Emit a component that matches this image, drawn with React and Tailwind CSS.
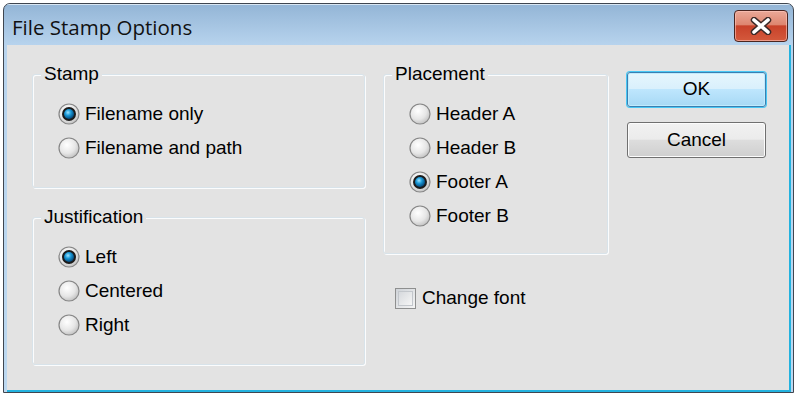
import React from 'react';

const font = { fontFamily: '"Liberation Sans", Arial, sans-serif' };

const Radio = ({ checked, id }) => (
    <svg width="22" height="22" viewBox="0 0 22 22" className="shrink-0">
        <defs>
            <radialGradient id={`rf${id}`} cx="40%" cy="35%" r="70%">
                <stop offset="0%" stopColor="#ffffff" />
                <stop offset="60%" stopColor="#e6e6e6" />
                <stop offset="100%" stopColor="#bdbdbd" />
            </radialGradient>
            <radialGradient id={`rb${id}`} cx="40%" cy="35%" r="65%">
                <stop offset="0%" stopColor="#9fe3ff" />
                <stop offset="45%" stopColor="#1a9ad8" />
                <stop offset="100%" stopColor="#05487a" />
            </radialGradient>
        </defs>
        <circle cx="11" cy="11" r="10" fill={`url(#rf${id})`} stroke="#878787" strokeWidth="1.2" />
        {checked && (
            <>
                <circle cx="11" cy="11" r="7" fill="#1b1b1b" />
                <circle cx="11" cy="11" r="5" fill={`url(#rb${id})`} />
            </>
        )}
    </svg>
);

const GroupBox = ({ label, height, children }) => (
    <div className={`relative border border-[#d8e3ea] rounded-[3px] shadow-[inset_1px_1px_0_#fbfcfd,1px_1px_0_#fbfcfd] pt-[22px] pl-[25px]`} style={{ height }}>
        <span className="absolute -top-[12px] left-[8px] px-[3px] bg-[#e3e3e3] text-[19px] leading-[22px] text-black">{label}</span>
        {children}
    </div>
);

const RadioRow = ({ label, checked, id }) => (
    <div className="flex items-center h-[34px] gap-[5px] text-[19px] text-black">
        <Radio checked={checked} id={id} />
        <span>{label}</span>
    </div>
);

const CloseButton = () => (
    <div className="w-[54px] h-[32px] rounded-[4px] border border-[#4a2520] overflow-hidden relative bg-[linear-gradient(#eaa898_0%,#de8670_45%,#c8422a_50%,#d4593c_100%)] flex items-center justify-center shadow-[inset_0_0_0_1px_rgba(255,200,190,0.6)]">
        <svg width="22" height="18" viewBox="0 0 22 18">
            <path d="M4 3 L18 15 M18 3 L4 15" stroke="#3c2a28" strokeWidth="6.5" strokeLinecap="round" />
            <path d="M4 3 L18 15 M18 3 L4 15" stroke="#ffffff" strokeWidth="3.6" strokeLinecap="round" />
        </svg>
    </div>
);

const App = () => {
    return (
        <div className="w-[800px] h-[398px] bg-white pt-[3px] pl-[3px]" style={font}>
            <div className="w-[791px] h-[390px] border border-[#3f4650] rounded-t-[7px] bg-[linear-gradient(#93b5d6_0px,#b8d4ee_42px,#bcd8f0_100%)] flex flex-col overflow-hidden">
                <div className="h-[41px] shrink-0 flex items-start justify-between pl-[8px] pr-[5px] shadow-[inset_0_1px_0_#d9e7f4]">
                    <span className="mt-[9px] text-[20.5px] leading-[28px] text-[#111]" style={{ fontFamily: '"Open Sans", "Noto Sans", sans-serif' }}>File Stamp Options</span>
                    <div className="mt-[6px]"><CloseButton /></div>
                </div>
                <div className="flex-1 ml-[3px] mr-[2px] border-r-2 border-b-2 border-[#23b2df] bg-[#e3e3e3] flex pl-[25px] pt-[27px]">
                    <div className="w-[333px] mt-[2px] flex flex-col gap-[29px]">
                        <GroupBox label="Stamp" height={114}>
                            <RadioRow id="s1" label="Filename only" checked />
                            <RadioRow id="s2" label="Filename and path" />
                        </GroupBox>
                        <GroupBox label="Justification" height={148}>
                            <RadioRow id="j1" label="Left" checked />
                            <RadioRow id="j2" label="Centered" />
                            <RadioRow id="j3" label="Right" />
                        </GroupBox>
                    </div>
                    <div className="w-[225px] ml-[18px] mt-[2px] flex flex-col">
                        <GroupBox label="Placement" height={180}>
                            <RadioRow id="p1" label="Header A" />
                            <RadioRow id="p2" label="Header B" />
                            <RadioRow id="p3" label="Footer A" checked />
                            <RadioRow id="p4" label="Footer B" />
                        </GroupBox>
                        <div className="mt-[30px] ml-[12px] flex items-center gap-[6px] text-[19px] text-black">
                            <div className="w-[21px] h-[21px] border border-[#8e8f8f] bg-[linear-gradient(135deg,#cfd3d8,#f4f4f4)] p-[2px]">
                                <div className="w-full h-full border border-[#c3c7cc] bg-[linear-gradient(135deg,#d6d9dd,#f6f6f6)]" />
                            </div>
                            <span>Change font</span>
                        </div>
                    </div>
                    <div className="w-[139px] ml-[19px] flex flex-col gap-[15px]">
                        <button className="h-[35px] rounded-[3px] border border-[#3c7fb1] shadow-[0_0_0_1px_#48c8f5,inset_0_0_0_1px_#c0ecfd] bg-[linear-gradient(#e6f6fd_0%,#d9f0fc_48%,#bee6fd_50%,#a7d9f5_100%)] text-[19px] text-black">OK</button>
                        <button className="h-[36px] rounded-[3px] border border-[#707070] shadow-[inset_0_0_0_1px_#fcfcfc] bg-[linear-gradient(#f2f2f2_0%,#ebebeb_48%,#dddddd_50%,#cfcfcf_100%)] text-[19px] text-black">Cancel</button>
                    </div>
                </div>
            </div>
        </div>
    );
};

export default App;
